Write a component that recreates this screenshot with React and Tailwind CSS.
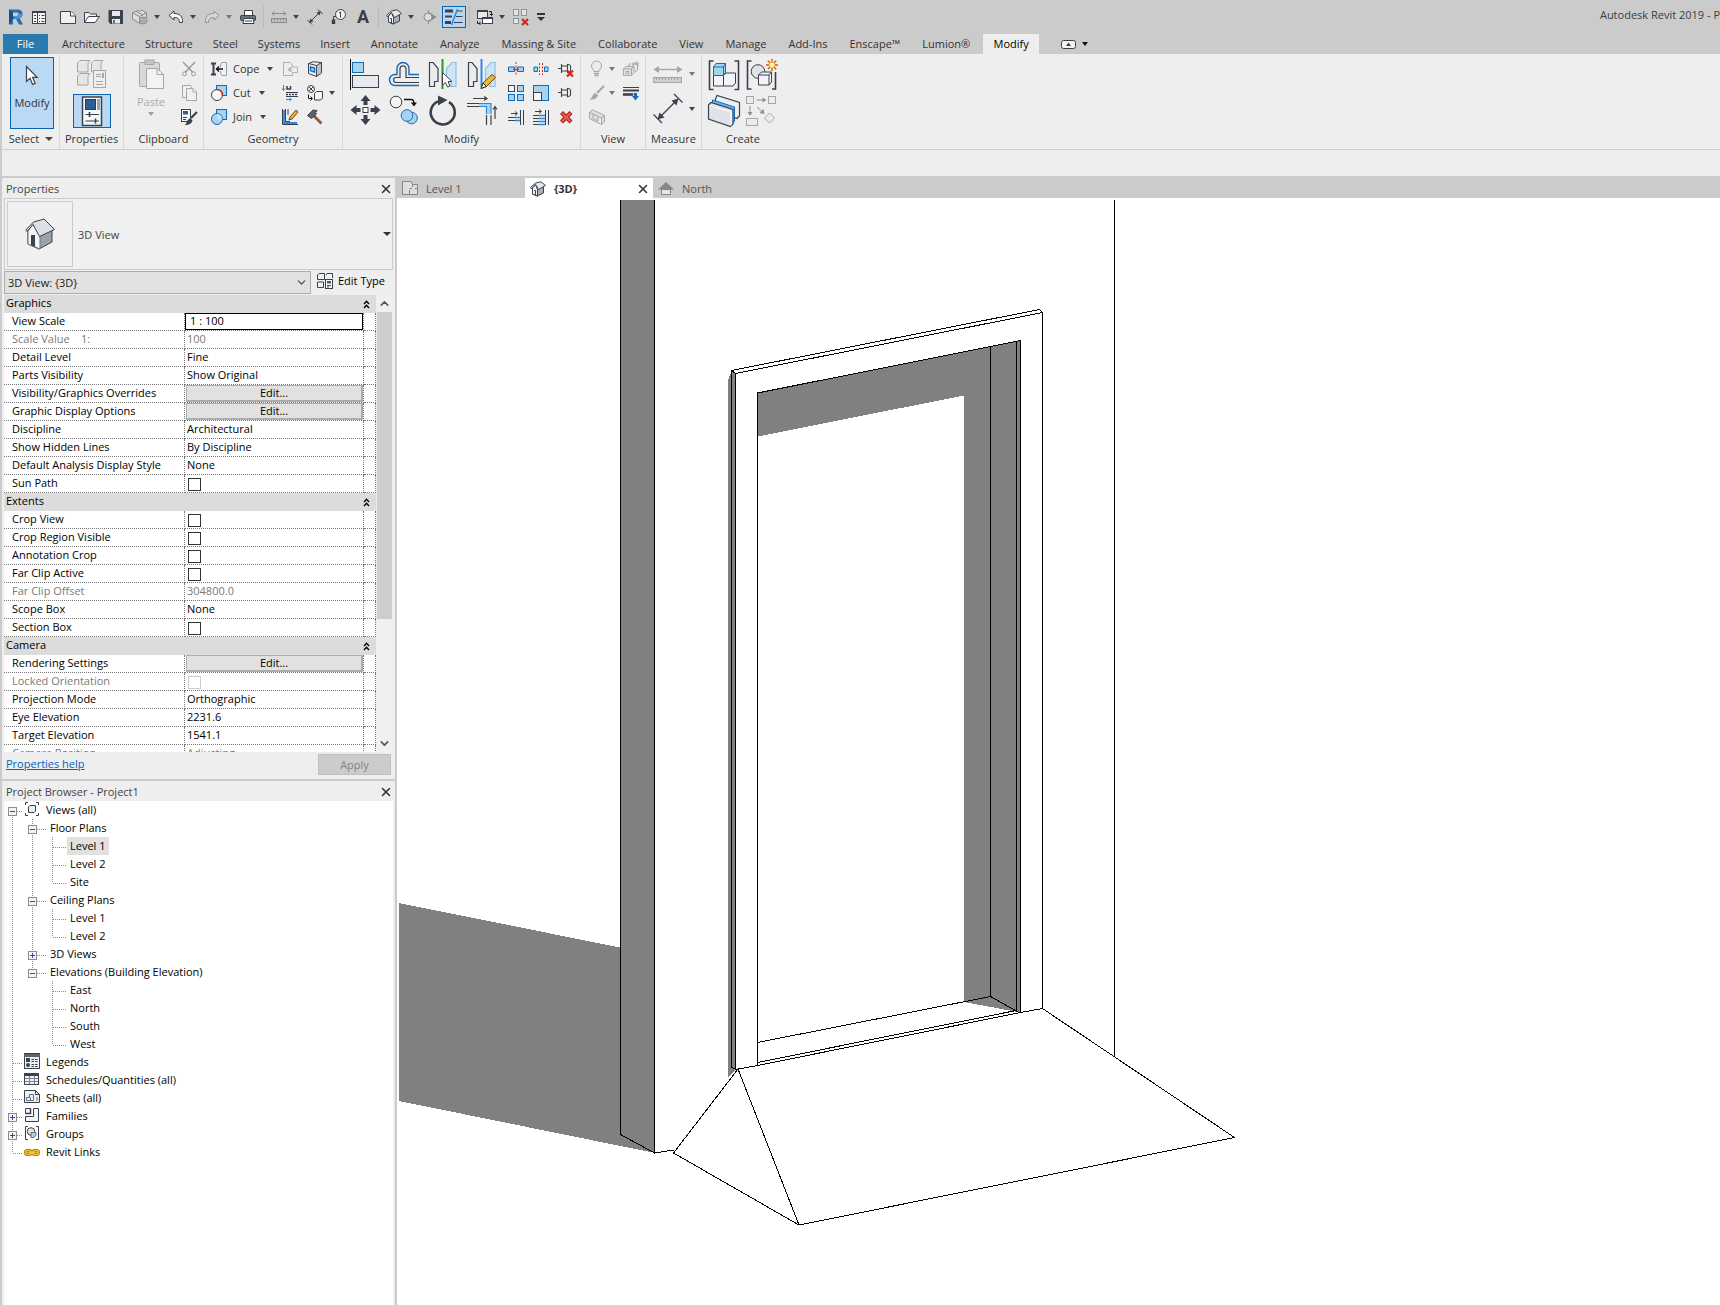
import { X, ChevronDown, ChevronUp } from 'lucide-react'

const DARK = '#3a414c'
const BLUE = '#0f6cbd'
const SKY = '#a8d3ec'
const DIM = '#a6a6a6'

function Ico({ w = 16, h = 16, children }) {
  return (
    <svg
      width={w}
      height={h}
      viewBox={`0 0 ${w} ${h}`}
      fill="none"
      stroke={DARK}
      className="block shrink-0 overflow-visible"
      aria-hidden="true"
    >
      {children}
    </svg>
  )
}

function Caret({ color = '#444', w = 6 }) {
  return (
    <svg width={w} height="4" viewBox="0 0 6 4" preserveAspectRatio="none" className="block shrink-0" aria-hidden="true">
      <path d="M0 0H6L3 4Z" fill={color} />
    </svg>
  )
}

/* ---------- quick access icons ---------- */

const RevitLogo = () => (
  <Ico>
    <path d="M1 0.5H9.5C13 0.5 14.6 2.4 14.6 5C14.6 7.2 13.4 8.6 11.6 9.2L15 15.5H11L8 10H5V15.5H1V3.5Z" fill="#2b6cb0" stroke="none" />
    <path d="M5 3.5H8.6C10 3.5 10.7 4.1 10.7 5.1C10.7 6.2 10 6.9 8.6 6.9H5Z" fill="#cbcbcb" stroke="none" />
    <path d="M1 0.5L5 3.5V10L1 15.5Z" fill="#1d4f86" stroke="none" />
    <path d="M5 6.9L8.6 6.9C10 6.9 10.7 6 10.7 5L14.5 5C14.5 7.5 13 9 11.6 9.2L8 10Z" fill="#4a9ad8" stroke="none" />
  </Ico>
)

const PanelIcon = () => (
  <Ico>
    <rect x="0.5" y="2.5" width="13" height="12" fill="#f4f5f7" />
    <path d="M0 3H14" strokeWidth="2" />
    <path d="M5.5 4V14.5" />
    <path d="M2 6.5H4M2 9.5H4M2 12.5H4M7 6.5H8M7 9.5H8M7 12.5H8M9.5 6.5H12.5M9.5 9.5H12.5M9.5 12.5H12.5" />
  </Ico>
)

const NewIcon = () => (
  <Ico>
    <path d="M0.5 2.5H11L15.5 7V14.5H0.5Z" fill="#eef0f3" />
    <path d="M10.5 2.5V7H15.5" fill="#fff" />
  </Ico>
)

const OpenIcon = () => (
  <Ico>
    <path d="M0.5 13.5V3.5H5L6.5 5H12.5V7" fill="#eef0f3" />
    <path d="M0.5 13.5L4.5 7.5H15.5L11 13.5Z" fill="#fff" />
  </Ico>
)

const SaveIcon = () => (
  <Ico>
    <path d="M1 1.5H14.5V14.5H2.5L1 13Z" fill={DARK} />
    <rect x="4" y="2" width="8" height="5" fill="#e6e9ee" stroke="none" />
    <rect x="4" y="10" width="8" height="4.5" fill="#e6e9ee" stroke="none" />
    <path d="M6 11V14" strokeWidth="1.5" />
  </Ico>
)

const SyncIcon = () => (
  <Ico>
    <g stroke="#8b8b8b">
      <path d="M0.5 4L6 1.5L8 2.5L9.5 1L14.5 4V10L8 14.5L0.5 10Z" fill="#dcdcdc" />
      <path d="M0.5 4L7.5 7.5L14.5 4M7.5 7.5V14M4 2.5L11 6" />
      <circle cx="11.5" cy="11.5" r="4" fill="#9b9b9b" stroke="none" />
      <path d="M8.5 10.5H14.5M9 13H14" stroke="#c4c4c4" />
    </g>
  </Ico>
)

const UndoIcon = () => (
  <Ico>
    <path d="M6 2L1 6.5L6 11V8.5C9.5 8.5 11 9 11.5 13.5H14.5C15 7.5 12 4.5 6 4.5Z" fill="#f7f7f7" />
  </Ico>
)

const RedoIcon = () => (
  <Ico>
    <path d="M10 2L15 6.5L10 11V8.5C6.5 8.5 5 9 4.5 13.5H1.5C1 7.5 4 4.5 10 4.5Z" fill="#d6d6d6" stroke="#929292" />
  </Ico>
)

const PrintIcon = () => (
  <Ico>
    <path d="M4.5 6V1.5H12.5V6" fill="#fff" />
    <rect x="0.5" y="6.5" width="15" height="5" rx="1" fill="#6a717c" />
    <path d="M4 9.5H13L14 14.5H3Z" fill="#fff" />
    <path d="M5 12H12" />
  </Ico>
)

const MeasureSmall = () => (
  <Ico>
    <g stroke="#8c8c8c">
      <path d="M1 4.5H15M3.5 2.5L1 4.5L3.5 6.5M12.5 2.5L15 4.5L12.5 6.5" />
      <rect x="0.5" y="9.5" width="15" height="4" fill="#c0c0c0" />
      <path d="M3.5 10V11.5M6.5 10V11.5M9.5 10V11.5M12.5 10V11.5" />
    </g>
  </Ico>
)

const DimSmall = () => (
  <Ico>
    <path d="M3 13L13 3" />
    <path d="M2 14L3.5 9.5L6.5 12.5ZM14 2L9.5 3.5L12.5 6.5Z" fill={DARK} stroke="none" />
    <path d="M0.5 11L5 15.5M11 0.5L15.5 5" />
  </Ico>
)

const TagIcon = () => (
  <Ico>
    <circle cx="9.5" cy="5.5" r="5" fill="#f2f3f5" />
    <path d="M8 4L9.5 3V8.5" />
    <path d="M5 7.5H2.5V11" />
    <path d="M0.8 10.5H4.2V15H0.8Z" fill={DARK} stroke="none" />
  </Ico>
)

const HouseSmall = () => (
  <Ico>
    <path d="M2.5 7V13L7 15L13.5 12V6L10 3.5Z" fill="#a9b0ba" />
    <path d="M2.5 7L5.5 3.5L7.5 8.5V15L2.5 13Z" fill="#f4f5f7" />
    <path d="M0.5 6.5L5.5 2L11 0.8L15.5 4.5L8.5 8.5L5.5 3.5L1.5 8Z" fill="#e5e7eb" />
    <path d="M4 9.5H5.5V14" />
  </Ico>
)

const SectionIcon = () => (
  <Ico>
    <path d="M6.5 1V15" stroke="#8c8c8c" />
    <path d="M7 3L14.5 8L7 13Z" fill="#8c8c8c" stroke="none" />
    <circle cx="6" cy="8" r="4" fill="#dcdcdc" stroke="#8c8c8c" />
  </Ico>
)

const ThinLines = () => (
  <Ico w={18} h={16}>
    <path d="M0 2H8M0 13.5H6" strokeWidth="3" />
    <path d="M0 7.5H7" strokeWidth="2" />
    <path d="M12 2H17.5M11 7.5H17.5M9 13.5H17.5" strokeWidth="1.2" />
    <path d="M12.5 0L6.5 16" stroke="#2a8be0" strokeWidth="1.5" />
  </Ico>
)

const SwitchWindows = () => (
  <Ico>
    <rect x="0.5" y="1.5" width="10" height="8" fill="#e6e8ec" />
    <path d="M0 2H11" strokeWidth="2" />
    <rect x="5.5" y="8.5" width="10" height="6" fill="#fff" />
    <path d="M5 9H16" strokeWidth="2" />
    <path d="M12 2.5H14.5V6M13 5L14.5 6.5L16 5M0.5 12V14.5H3M2.5 13L4 14.5L2.5 16" stroke="#222" />
  </Ico>
)

const CloseHidden = () => (
  <Ico>
    <g stroke="#8e949c" fill="#e3e5e8">
      <rect x="0.5" y="0.5" width="5" height="6" />
      <rect x="8.5" y="0.5" width="5" height="6" />
      <rect x="0.5" y="9.5" width="5" height="5" />
    </g>
    <path d="M9 10L15 16M15 10L9 16" stroke="#c92a1e" strokeWidth="2.2" />
  </Ico>
)

/* ---------- ribbon icons ---------- */

const CursorBig = () => (
  <Ico w={14} h={22}>
    <path d="M1.5 1.5V16.5L5 13.3L7.6 19.5L10.2 18.4L7.6 12.4H12.2Z" fill="#fff" strokeWidth="1.2" />
  </Ico>
)

const TypeProps = () => (
  <Ico w={32} h={30}>
    <g stroke={DIM} fill="#e6e6e6">
      <path d="M1.5 4L4 1.5H14L12 4V13H1.5ZM15.5 4L18 1.5H27L25 4V13H15.5Z" />
      <path d="M1.5 17L4 14.5H14L12 17V26H1.5Z" />
      <rect x="17.5" y="11.5" width="12" height="17" fill="#eee" />
      <path d="M20 15.5H25M20 17.5H25M20 22.5H27M20 25.5H27" />
      <path d="M27 14V19" strokeWidth="2" />
    </g>
  </Ico>
)

const PropsPanel = () => (
  <Ico w={22} h={31}>
    <rect x="1.5" y="1" width="19" height="28.5" fill="#f7f8fa" strokeWidth="1.5" />
    <rect x="4.5" y="3.5" width="10" height="10" fill="#2c5f96" stroke="#1d3f66" />
    <rect x="16" y="3" width="3" height="11" fill="#9ba3ae" stroke="none" />
    <path d="M4.5 18.5H18M4.5 25H18" />
    <path d="M8.5 16V21M14.5 22.5V27.5" strokeWidth="1.6" />
  </Ico>
)

const PasteIcon = () => (
  <Ico w={27} h={31}>
    <g stroke={DIM}>
      <rect x="1.5" y="3.5" width="20" height="24" rx="1" fill="#d9d9d9" />
      <rect x="7" y="1" width="9" height="4.5" fill="#c4c4c4" />
      <path d="M8.5 9.5H19L25.5 15.5V29.5H8.5Z" fill="#f3f3f3" />
      <path d="M19 9.5V15.5H25.5" />
    </g>
  </Ico>
)

const CutClip = () => (
  <Ico>
    <g stroke="#9b9b9b">
      <path d="M2 1L12 11.5M14 1L4 11.5" strokeWidth="1.5" />
      <circle cx="3.5" cy="12.8" r="2" />
      <circle cx="12.5" cy="12.8" r="2" />
    </g>
  </Ico>
)

const CopyClip = () => (
  <Ico>
    <g stroke={DIM} fill="#f0f0f0">
      <path d="M1.5 0.5H9.5L11 3V12.5H1.5Z" />
      <path d="M5.5 3.5H12L15.5 7V15.5H5.5Z" />
      <path d="M12 3.5V7H15.5" />
    </g>
  </Ico>
)

const MatchType = () => (
  <Ico>
    <rect x="0.5" y="0.5" width="9" height="12" fill="#f7f8fa" />
    <rect x="2" y="2" width="5" height="3.5" fill="#2c5f96" stroke="none" />
    <path d="M2 8.5H6M2 10.5H5" />
    <path d="M16 3L10 9" strokeWidth="2.2" />
    <path d="M4 16C5.5 15 5.5 11 8.5 9.5L11.5 11C11.5 14 8 16 4 16Z" fill={DARK} stroke="none" />
  </Ico>
)

const CopeIcon = () => (
  <Ico>
    <path d="M0 2.5H5M2.5 2.5V13.5M0 13.5H5" strokeWidth="2" />
    <path d="M11 1.5H15.5V14.5H11L9.5 12V10M9.5 6V4L11 1.5" fill="#eef1f5" stroke="#98a0ac" />
    <path d="M5 8H12M8 5.5L5.5 8L8 10.5" stroke="#111" strokeWidth="1.4" />
  </Ico>
)

const CutGeom = () => (
  <Ico>
    <rect x="5.5" y="0.5" width="10" height="10" fill={SKY} stroke={BLUE} />
    <circle cx="6" cy="10" r="5.5" fill="#f8f8f8" />
    <path d="M5.5 4.5C9 4.5 11.5 7 11.5 10.5" stroke="#e02418" strokeWidth="1.6" />
  </Ico>
)

const JoinGeom = () => (
  <Ico>
    <rect x="5.5" y="0.5" width="10" height="10" fill={SKY} stroke={BLUE} />
    <circle cx="6" cy="10" r="5.5" fill={SKY} stroke={BLUE} />
    <path d="M6 10.5V5C9 5 11.3 7.5 11.3 10.5Z" fill="#c7e2f2" stroke="none" />
  </Ico>
)

const CopeGrey = () => (
  <Ico>
    <g stroke="#b0b0b0" fill="#ececec">
      <path d="M1.5 1.5H8L10.5 4V6H15.5V11.5H10.5V14.5H1.5Z" />
      <path d="M6 8.5L9 6V11Z" fill="#c0c0c0" />
    </g>
  </Ico>
)

const WallFace = () => (
  <Ico>
    <path d="M1.5 2.5L9.5 4.5V15.5L1.5 12.5Z" fill="#eef1f5" />
    <path d="M9.5 4.5L14.5 1.5V12L9.5 15.5Z" fill="#bcc3cd" />
    <path d="M1.5 2.5L6 0.8L14.5 1.5" />
    <path d="M3.5 6L7.5 7V11L3.5 9.8Z" fill={SKY} stroke={BLUE} strokeWidth="1.4" />
  </Ico>
)

const BeamJoin = () => (
  <Ico>
    <path d="M1.5 0V5M0 3.5L1.5 5.5L3 3.5M4 14.5H9M7.5 13L9.5 14.5L7.5 16" stroke="#2a8be0" />
    <path d="M5 1V4H8.5V1" strokeWidth="1.5" />
    <path d="M4 7.5H16M4 11.5H16" />
    <path d="M4 9.5H16" strokeWidth="1.6" strokeDasharray="2 1" />
  </Ico>
)

const UnjoinIcon = () => (
  <Ico>
    <circle cx="4" cy="4" r="3.5" fill="#f6f6f6" />
    <path d="M2 2L6 6M6 2L2 6" />
    <path d="M1.5 9.5V13.5H5M3.5 11.5L5.5 13.5L3.5 15.5" stroke="#111" />
    <path d="M7.5 8.5L9.5 6.5H15.5V13L13.5 15H7.5Z" fill="#f2f4f7" />
  </Ico>
)

const SplitFace = () => (
  <Ico>
    <path d="M0.5 0V15.5H16M3.5 0V12.5H8M6 0V6" />
    <path d="M2 1V14H15" stroke="#2a8be0" strokeWidth="1.8" />
    <path d="M7 11L8 8L14 1L16 3L10 10Z" fill="#f2b13c" stroke="#6b4a12" />
  </Ico>
)

const HammerIcon = () => (
  <Ico>
    <path d="M7 7L14.5 14.5" stroke="#8a5a44" strokeWidth="2.8" />
    <path d="M0.5 6.5L6 1L10 1.5L8.5 3.5L9.5 5L4.5 9.5Z" fill="#5b626d" />
  </Ico>
)

const AlignIcon = () => (
  <Ico w={32} h={32}>
    <path d="M0.5 0V31" stroke="#111" />
    <rect x="2.5" y="3.5" width="11" height="10" fill={SKY} stroke={BLUE} />
    <rect x="2.5" y="16.5" width="26" height="12" fill="#e6e9ee" />
  </Ico>
)

const OffsetIcon = () => (
  <Ico w={32} h={32}>
    <path d="M30 15.5H20V9.5A6 6 0 0 0 8 9.5V15.5H6A5.5 5.5 0 0 0 6 26.5H30" stroke={BLUE} strokeWidth="1.4" />
    <path d="M30 18.5H17V9.8A3 3 0 0 0 11 9.8V18.5H7A2.5 2.5 0 0 0 7 23.5H30" strokeWidth="1.2" />
  </Ico>
)

const MirrorPick = () => (
  <Ico w={32} h={32}>
    <path d="M1.5 3.5H5L10 9.5V22.5H6.5V27.5H1.5Z" fill="#e9ecf0" strokeWidth="1.2" />
    <path d="M28 3.5H24L18.5 9.5V22.5H23V27.5H28Z" fill="#cfe5f3" stroke="#8fc1e2" strokeWidth="1.2" />
    <path d="M14.5 0V30" stroke="#1fa01f" strokeWidth="2" />
    <path d="M14.5 13.5V26L17.5 23.5L19.5 28L22 27L20 22.5H24Z" fill="#fff" />
  </Ico>
)

const MirrorDraw = () => (
  <Ico w={32} h={32}>
    <path d="M1.5 3.5H5L10 9.5V22.5H6.5V27.5H1.5Z" fill="#e9ecf0" strokeWidth="1.2" />
    <path d="M28 3.5H24L18.5 9.5V22.5H23V27.5H28Z" fill="#cfe5f3" stroke="#8fc1e2" strokeWidth="1.2" />
    <path d="M14.5 0V28" stroke="#2a8be0" strokeWidth="2" />
    <path d="M14 29.5L16 24L25 15.5L28.5 18.5L19.5 27.5Z" fill="#f5b43a" stroke="#6b4a12" />
    <path d="M14 29.5L16 24L19.5 27.5Z" fill="#fff3d6" stroke="#3a2a10" />
  </Ico>
)

const MoveIcon = () => (
  <Ico w={32} h={32}>
    <g fill={DARK} stroke="none">
      <path d="M15.5 1L20.5 7H17.5V11H13.5V7H10.5Z" />
      <path d="M15.5 31L20.5 25H17.5V21H13.5V25H10.5Z" />
      <path d="M0.5 16L6.5 11V14H10.5V18H6.5V21Z" />
      <path d="M30.5 16L24.5 11V14H20.5V18H24.5V21Z" />
    </g>
    <rect x="13" y="13.5" width="5" height="5" fill="#fff" />
  </Ico>
)

const CopyIcon = () => (
  <Ico w={32} h={32}>
    <circle cx="7" cy="8" r="5.8" fill="#f3f4f6" />
    <path d="M15 5.5H22C24.5 5.5 25 7 25 9.5" stroke="#111" strokeWidth="1.3" />
    <path d="M21.8 8.5H28L25 12.5Z" fill="#111" stroke="none" />
    <circle cx="22.5" cy="24" r="5.8" fill={SKY} stroke={BLUE} />
    <circle cx="18" cy="21.5" r="5.8" fill={SKY} stroke={BLUE} />
  </Ico>
)

const RotateIcon = () => (
  <Ico w={32} h={32}>
    <path d="M21 8.2A12 12 0 1 1 10 7.4" strokeWidth="2.6" />
    <path d="M10 1.5L19.5 6L10 11.5Z" fill={DARK} stroke="none" />
  </Ico>
)

const TrimIcon = () => (
  <Ico w={32} h={32}>
    <path d="M6 4.5H20M17 2.5L20 4.5L17 6.5" strokeWidth="1.2" />
    <path d="M0 9.5H12M0 12.5H12M19.5 21V31M24 21V31" strokeWidth="1.2" />
    <path d="M12 9.5H24V20H19.5V12.5H12Z" fill={SKY} stroke="none" />
    <path d="M12 9.5H24V20M12 12.5H19.5V20" stroke="#2a8be0" strokeWidth="1.2" />
    <path d="M28 25V12.5M26 15.5L28 12.5L30 15.5" strokeWidth="1.2" />
  </Ico>
)

const SplitEl = () => (
  <Ico>
    <path d="M8 1V15" stroke="#d0281c" strokeDasharray="2 1.5" />
    <path d="M0.5 6H6.5V10.5H0.5ZM9.5 6H15.5V10.5H9.5Z" fill={SKY} stroke={BLUE} />
    <path d="M5 8.2H11" stroke="#d0281c" />
  </Ico>
)

const SplitGap = () => (
  <Ico>
    <path d="M6.5 2V14M9.5 2V14" stroke="#d0281c" strokeDasharray="2 1.5" />
    <path d="M1 6H4.5V10.5H1ZM11.5 6H15V10.5H11.5Z" fill={SKY} stroke={BLUE} />
  </Ico>
)

const PinIcon = ({ cross }) => (
  <Ico>
    <path d="M0 7.5H3.5M3.5 3V12M3.5 5H9.5M3.5 10H9.5M9.5 3C10 4 12.5 3.5 12.5 5V10C12.5 11.5 10 11 9.5 12Z" fill="#f3f3f3" strokeWidth="1.1" />
    {cross && <path d="M9 9.5L15 15.5M15 9.5L9 15.5" stroke="#d0281c" strokeWidth="2.2" />}
  </Ico>
)

const ArrayIcon = () => (
  <Ico>
    <rect x="0.5" y="0.5" width="6" height="6" fill="#f3f4f6" />
    <g fill={SKY} stroke={BLUE}>
      <rect x="9.5" y="0.5" width="6" height="6" />
      <rect x="0.5" y="9.5" width="6" height="6" />
      <rect x="9.5" y="9.5" width="6" height="6" />
    </g>
  </Ico>
)

const ScaleIcon = () => (
  <Ico>
    <rect x="0.5" y="0.5" width="15" height="15" fill={SKY} stroke={BLUE} />
    <rect x="0.5" y="7.5" width="8" height="8" fill="#f5f5f5" />
  </Ico>
)

const TrimOne = () => (
  <Ico>
    <path d="M3 4.5H9M7 2.5L9.5 4.5L7 6.5M0 8.5H7M0 11.5H7M12.5 1V16M15.5 1V16" />
    <path d="M7 8.5H12M7 11.5H12" stroke="#2a8be0" strokeWidth="1.4" />
  </Ico>
)

const TrimMany = () => (
  <Ico>
    <path d="M2 2.5H8M6 0.5L8.5 2.5L6 4.5M0 6.5H6M0 9.5H6M0 12.5H6M0 15.5H6M12.5 1V16M15.5 1V16" />
    <path d="M6 6.5H12M6 9.5H12M6 12.5H12M6 15.5H12" stroke="#2a8be0" strokeWidth="1.4" />
  </Ico>
)

const DeleteIcon = () => (
  <Ico>
    <path d="M3.5 3.5L13 13M13 3.5L3.5 13" stroke="#a3160e" strokeWidth="4.2" />
    <path d="M4 4L12.5 12.5M12.5 4L4 12.5" stroke="#ef5a50" strokeWidth="2.4" />
  </Ico>
)

const BulbIcon = () => (
  <Ico>
    <path d="M5 10.5C5 8.5 2.5 8 2.5 5A5 5 0 0 1 12.5 5C12.5 8 10 8.5 10 10.5Z" fill="#ececec" stroke={DIM} />
    <path d="M5 12.5H10M5.5 14.5H9.5" stroke={DIM} strokeWidth="1.4" />
  </Ico>
)

const DisplaceIcon = () => (
  <Ico>
    <g stroke={DIM} fill="#e4e4e4">
      <path d="M0.5 8L3 5.5H11V12L8.5 14.5H0.5Z" />
      <path d="M0.5 8H8.5V14.5M8.5 8L11 5.5M3 10.5H6V12.5H3Z" />
      <path d="M6 5V3H8M12 11L14.5 9V3M9 1.5L16 5M14 0L10 5M16 2L9 3.5" />
    </g>
  </Ico>
)

const BrushIcon = () => (
  <Ico>
    <path d="M15 1L8 8" stroke={DIM} strokeWidth="2.2" />
    <path d="M0.5 14.5C3 13.5 3 9.5 6 8L9 10C8.5 13.5 5 15 0.5 14.5Z" fill={DIM} stroke="none" />
  </Ico>
)

const LineWork = () => (
  <Ico>
    <path d="M0 2.5H16" />
    <path d="M0 5.5H16" strokeWidth="2" />
    <path d="M0 9.5H10" strokeWidth="2.6" />
    <path d="M10.8 8H14V11H16L12.4 15.5L9 11H10.8Z" fill="#0f6cbd" stroke="none" />
  </Ico>
)

const BoxIcon = () => (
  <Ico>
    <g stroke={DIM} fill="#dedede">
      <path d="M0.5 3.5L3.5 0.8L15.5 6.5V13L12.5 15.5L0.5 9.5Z" />
      <path d="M0.5 3.5L12.5 9V15.5M12.5 9L15.5 6.5M4 5V9.5L9 12V8" fill="#eee" />
    </g>
  </Ico>
)

const MeasureBig = () => (
  <Ico w={30} h={24}>
    <g stroke={DIM}>
      <path d="M2 7.5H28" strokeWidth="1.4" />
      <path d="M0.5 7.5L6 4V11ZM29.5 7.5L24 4V11Z" fill={DIM} stroke="none" />
      <rect x="0.5" y="15.5" width="28" height="5" fill="#cfcfcf" />
      <path d="M3.5 16V18M6.5 16V18M9.5 16V18M12.5 16V18M15.5 16V18M18.5 16V18M21.5 16V18M24.5 16V18" />
    </g>
  </Ico>
)

const DimBig = () => (
  <Ico w={30} h={32}>
    <path d="M7 24L23 8" strokeWidth="1.3" />
    <path d="M4.5 26.5L6.5 19.5L11.5 24.5ZM25.5 5.5L18.5 7.5L23.5 12.5Z" fill={DARK} stroke="none" />
    <path d="M0.5 21.5L9 30M21 1L29.5 9.5" strokeWidth="1.3" />
  </Ico>
)

const AssemblyIcon = () => (
  <Ico w={32} h={32}>
    <path d="M5.5 2H1.5V30.5H5.5M26.5 2H30.5V30.5H26.5" strokeWidth="1.6" />
    <path d="M5.5 16.5H15.5V27H5.5ZM15.5 16.5L18 14H27.5V24L25 27H15.5" fill="#f2f4f7" />
    <path d="M5.5 8L8 4.5H17.5V13.5L15.5 16.5H5.5Z" fill={SKY} stroke={BLUE} />
    <path d="M5.5 8H15.5V16.5M15.5 8L17.5 4.5" stroke={BLUE} />
  </Ico>
)

const GroupIcon = () => (
  <Ico w={32} h={32}>
    <path d="M5.5 2H1.5V30H5.5M26 30H29.5V13" strokeWidth="1.6" />
    <circle cx="12" cy="12.5" r="6.8" fill="#dfe3e8" />
    <path d="M12.5 16L15.5 13H25.5V23L23 26H12.5Z" fill="#f2f4f7" />
    <path d="M12.5 16H23V26M23 16L25.5 13" />
    <path d="M26 0V12M20 6H32M21.8 1.8L30.2 10.2M30.2 1.8L21.8 10.2" stroke="#d8581a" strokeWidth="1.4" />
    <circle cx="26" cy="6" r="3" fill="#fff6a8" stroke="#f0a020" />
  </Ico>
)

const PartsIcon = () => (
  <Ico w={32} h={34}>
    <path d="M7.5 5L9 1.5L31.5 8.5V22L29 24.5L7.5 17Z" fill="#eceff3" strokeWidth="1.2" />
    <path d="M4.5 9V6L26.5 13V27L24.5 29.5L4.5 22Z" fill="#6db6ee" stroke={BLUE} />
    <path d="M0.5 11L3 8.5L25 15.5V30L22.5 32.5L0.5 25Z" fill="#dfe3e9" strokeWidth="1.2" />
    <path d="M1.5 11.5L23 18V31.5" stroke="#fff" />
  </Ico>
)

const SimilarIcon = () => (
  <Ico w={32} h={32}>
    <g stroke={DIM} fill="#ececec">
      <rect x="0.5" y="1.5" width="7" height="7" />
      <rect x="22.5" y="1.5" width="7" height="7" />
      <rect x="0.5" y="23.5" width="11" height="7" />
      <path d="M23.5 18L28.5 23L23.5 28L18.5 23Z" />
      <path d="M10.5 5H19M4 11V19M11 12L17 17.5" stroke="#8f8f8f" fill="none" />
      <path d="M20.5 5L16.5 2.5V7.5ZM4 21L1.5 17H6.5ZM18.5 19L17.5 14L13.5 18Z" fill="#8f8f8f" stroke="none" />
    </g>
  </Ico>
)

/* ---------- panel and tab icons ---------- */

const HouseBig = () => (
  <Ico w={30} h={32}>
    <path d="M3 13V26L14 31L27 24V11L18 5Z" fill="#9aa2ad" />
    <path d="M3 13L8 6L15 17V31L3 26Z" fill="#f3f4f6" stroke="#6b727d" />
    <path d="M0.8 12L8.5 4L19 1L29.5 11.5L14.5 18.5L8 6.5L2 13.5Z" fill="#dcdfe4" />
    <path d="M6 17H10V29L6 27Z" fill="#3c424c" stroke="none" />
  </Ico>
)

const EditTypeIcon = () => (
  <Ico>
    <path d="M0.5 2L2 0.5H7.5V6.5H0.5ZM9 2L10 0.5H15.5V5M0.5 9H6.5V14.5H0.5Z" fill="#f2f3f5" />
    <rect x="8.5" y="6.5" width="7" height="9" fill="#fff" />
    <rect x="10" y="8" width="4" height="2.5" fill="#2c5f96" stroke="none" />
    <path d="M10 12.5H14M10 14H12" />
  </Ico>
)

const PlanTab = () => (
  <Ico>
    <g stroke="#84888e" fill="#dedede">
      <path d="M0.5 0.5H9L10.5 3.5H15.5V13.5H0.5Z" />
      <path d="M7.5 13V9M7.5 7.5H10M10.5 3.5V6M13 7.5H15" />
    </g>
  </Ico>
)

const ElevTab = () => (
  <Ico>
    <path d="M8 1L16 8.5H0Z" fill="#84888e" stroke="none" />
    <rect x="3.5" y="8.5" width="9" height="5" fill="#e6e6e6" stroke="#84888e" />
  </Ico>
)

const ViewsIcon = () => (
  <Ico>
    <path d="M4 1.5H1.5V4M12 1.5H14.5V4M4 14.5H1.5V12M12 14.5H14.5V12" />
    <path d="M4.5 6L6 4.5H11.5V10L10 11.5H4.5Z" fill="#eef0f3" />
  </Ico>
)

const LegendIcon = () => (
  <Ico>
    <rect x="0.5" y="0.5" width="15" height="15" fill="#eef0f3" />
    <path d="M0 2.5H16" strokeWidth="3" stroke="#5b626d" />
    <rect x="2.5" y="5.5" width="3" height="3" fill={DARK} />
    <circle cx="4" cy="12" r="2" fill={DARK} stroke="none" />
    <path d="M7.5 6.5H13.5M7.5 8.5H13.5M7.5 11.5H13.5M7.5 13.5H13.5" strokeDasharray="2.5 1" />
  </Ico>
)

const ScheduleIcon = () => (
  <Ico>
    <rect x="0.5" y="2.5" width="14" height="11" fill="#eef0f3" />
    <path d="M0 3.5H15" strokeWidth="3" />
    <path d="M1 7.5H14M1 10.5H14M5.5 5V13M10.5 5V13" stroke="#7b828d" />
  </Ico>
)

const SheetIcon = () => (
  <Ico>
    <path d="M0.5 1.5H11.5L15.5 5.5V13.5H0.5Z" fill="#eef0f3" />
    <path d="M11.5 1.5V5.5H15.5" />
    <path d="M2.5 11.5V8.5H5.5V5.5H9.5V11.5H6.5V8.5M2.5 11.5H6M13 8V12" stroke="#5b7186" />
  </Ico>
)

const FamilyIcon = () => (
  <Ico>
    <path d="M1.5 1.5H6.5V6.5H1.5ZM9.5 1.5H14.5V14.5H1.5V9.5H9.5Z" fill="#f5f6f8" />
    <path d="M6.5 1.5V6.5H1.5" strokeWidth="1.5" />
  </Ico>
)

const GroupsTree = () => (
  <Ico>
    <path d="M4 1.5H1.5V14.5H4M12 1.5H14.5V14.5H12" />
    <circle cx="7" cy="6.5" r="3.8" fill="#dfe3e8" />
    <path d="M7 7.5H12V10L10 12.5H7Z" fill="#c3cbd6" stroke="#5b7186" />
  </Ico>
)

const LinkIcon = () => (
  <Ico>
    <g stroke="#b57a00" strokeWidth="3.2">
      <rect x="1.6" y="7.6" width="5.6" height="3.8" rx="1.9" />
      <rect x="8.8" y="7.6" width="5.6" height="3.8" rx="1.9" />
    </g>
    <g stroke="#f5c93a" strokeWidth="1.4">
      <rect x="1.6" y="7.6" width="5.6" height="3.8" rx="1.9" />
      <rect x="8.8" y="7.6" width="5.6" height="3.8" rx="1.9" />
      <path d="M5.5 9.5H10.5" />
    </g>
  </Ico>
)

/* ---------- top bar ---------- */

function QatButton({ label, caret, caretColor, children }) {
  return (
    <button type="button" aria-label={label} className="flex h-5 items-center gap-[6px]">
      {children}
      {caret && <Caret color={caretColor} />}
    </button>
  )
}

const QatSep = () => <span className="-mx-px h-[22px] w-px bg-[#b9b9b9]" />

function QuickAccess() {
  return (
    <header className="flex h-[34px] items-center justify-between overflow-hidden pl-2">
      <div className="flex shrink-0 items-center gap-2">
        <QatButton label="Revit"><RevitLogo /></QatButton>
        <QatButton label="Home"><PanelIcon /></QatButton>
        <span className="-ml-1" />
        <QatButton label="New"><NewIcon /></QatButton>
        <QatButton label="Open"><OpenIcon /></QatButton>
        <QatButton label="Save"><SaveIcon /></QatButton>
        <QatButton label="Synchronize" caret><SyncIcon /></QatButton>
        <QatButton label="Undo" caret><UndoIcon /></QatButton>
        <QatButton label="Redo" caret caretColor="#777"><RedoIcon /></QatButton>
        <QatButton label="Print"><PrintIcon /></QatButton>
        <QatSep />
        <QatButton label="Measure" caret><MeasureSmall /></QatButton>
        <QatButton label="Aligned dimension"><DimSmall /></QatButton>
        <QatButton label="Tag by category"><TagIcon /></QatButton>
        <button type="button" className="w-4 text-center font-['Roboto',sans-serif] text-[18px] leading-5 font-bold text-[#3a3f47]">A</button>
        <QatSep />
        <QatButton label="Default 3D view" caret><HouseSmall /></QatButton>
        <QatButton label="Section"><SectionIcon /></QatButton>
        <button
          type="button"
          aria-label="Thin lines"
          className="-mx-1 flex h-[22px] w-6 items-center justify-center border border-[#0a64b4] bg-[#b5d7f3]"
        >
          <ThinLines />
        </button>
        <QatSep />
        <QatButton label="Switch windows" caret><SwitchWindows /></QatButton>
        <QatButton label="Close hidden windows"><CloseHidden /></QatButton>
        <button type="button" aria-label="Customize" className="flex w-2 flex-col items-center gap-[2px]">
          <span className="h-[2px] w-2 bg-[#333]" />
          <Caret color="#333" w={8} />
        </button>
      </div>
      <span className="h-[34px] pt-[7px] whitespace-nowrap text-[#3c3c3c]">Autodesk Revit 2019 - P</span>
    </header>
  )
}

const MAIN_TABS = ['Architecture', 'Structure', 'Steel', 'Systems', 'Insert']
const MORE_TABS = [
  'Annotate', 'Analyze', 'Massing & Site', 'Collaborate', 'View', 'Manage', 'Add-Ins', 'Enscape™', 'Lumion®',
]

function RibbonTabs() {
  return (
    <nav className="flex h-5 items-stretch pl-[3px] text-[#333]">
      <button type="button" className="mr-1 w-[45px] bg-[#2a7ab0] text-white">File</button>
      {MAIN_TABS.map((tab) => (
        <button type="button" key={tab} className="px-[10px] whitespace-nowrap">{tab}</button>
      ))}
      {MORE_TABS.map((tab) => (
        <button type="button" key={tab} className="px-[11px] whitespace-nowrap">{tab}</button>
      ))}
      <button type="button" className="ml-[2px] w-14 bg-[#eee] text-black">Modify</button>
      <button type="button" aria-label="Minimize ribbon" className="ml-[22px] flex items-center gap-[6px]">
        <Ico w={15} h={9}>
          <rect x="0.5" y="0.5" width="14" height="8" rx="2" fill="#f3f3f3" />
          <path d="M7.5 2.5L10 6H5Z" fill={DARK} stroke="none" />
        </Ico>
        <Caret color="#111" />
      </button>
    </nav>
  )
}

/* ---------- ribbon ---------- */

function Panel({ title, width, last, caret, children }) {
  return (
    <section className={`flex shrink-0 flex-col ${width} ${last ? '' : 'border-r border-[#d9d9d9]'}`}>
      <div className="flex h-[74px] items-start">{children}</div>
      <h2 className="flex h-5 items-center justify-center gap-[6px]">
        {title}
        {caret && <Caret w={8} />}
      </h2>
    </section>
  )
}

function Tool({ label, children }) {
  return <button type="button" aria-label={label} className="flex items-center">{children}</button>
}

function GeomTool({ label, icon }) {
  return (
    <button type="button" className="flex h-4 items-center gap-[6px]">
      {icon}
      <span>{label}</span>
      <span className="ml-[2px]"><Caret /></span>
    </button>
  )
}

function Ribbon() {
  return (
    <div className="ml-[2px] flex h-24 overflow-hidden border-b border-[#cdcdcd] bg-[#eee] pt-px pl-px text-[#333]">
      <Panel title="Select" width="w-[57px]" caret>
        <button
          type="button"
          className="mt-[2px] ml-[7px] flex h-[72px] w-11 flex-col items-center border border-[#0a64b4] bg-[#b9d9f4] pt-[7px]"
        >
          <CursorBig />
          <span className="mt-2">Modify</span>
        </button>
      </Panel>

      <Panel title="Properties" width="w-16">
        <div className="flex w-full flex-col items-center pt-1">
          <Tool label="Type properties"><TypeProps /></Tool>
          <button
            type="button"
            aria-label="Properties"
            className="mt-[5px] flex h-[34px] w-[38px] items-center justify-center border border-[#0a64b4] bg-[#b9d9f4]"
          >
            <PropsPanel />
          </button>
        </div>
      </Panel>

      <Panel title="Clipboard" width="w-20">
        <button type="button" className="mt-1 ml-3 flex w-[30px] flex-col items-center text-[#a8a8a8]">
          <PasteIcon />
          <span className="mt-1 mb-[2px]">Paste</span>
          <Caret color="#a0a0a0" />
        </button>
        <div className="mt-[6px] ml-[15px] flex flex-col gap-2">
          <Tool label="Cut to clipboard"><CutClip /></Tool>
          <Tool label="Copy to clipboard"><CopyClip /></Tool>
          <Tool label="Match type"><MatchType /></Tool>
        </div>
      </Panel>

      <Panel title="Geometry" width="w-[139px]">
        <div className="mt-[6px] ml-[7px] flex w-[71px] flex-col items-start gap-2">
          <GeomTool label="Cope" icon={<CopeIcon />} />
          <GeomTool label="Cut" icon={<CutGeom />} />
          <GeomTool label="Join" icon={<JoinGeom />} />
        </div>
        <div className="mt-[6px] grid grid-cols-[16px_28px] gap-x-[9px] gap-y-2">
          <Tool label="Remove coping"><CopeGrey /></Tool>
          <Tool label="Wall opening"><WallFace /></Tool>
          <Tool label="Beam joins"><BeamJoin /></Tool>
          <button type="button" aria-label="Wall joins" className="flex items-center gap-[6px]">
            <UnjoinIcon />
            <Caret />
          </button>
          <Tool label="Split face"><SplitFace /></Tool>
          <Tool label="Demolish"><HammerIcon /></Tool>
        </div>
      </Panel>

      <Panel title="Modify" width="w-[238px]">
        <div className="mt-1 ml-[7px] grid grid-cols-4 gap-x-[7px] gap-y-[3px]">
          <Tool label="Align"><AlignIcon /></Tool>
          <Tool label="Offset"><OffsetIcon /></Tool>
          <Tool label="Mirror pick axis"><MirrorPick /></Tool>
          <Tool label="Mirror draw axis"><MirrorDraw /></Tool>
          <Tool label="Move"><MoveIcon /></Tool>
          <Tool label="Copy"><CopyIcon /></Tool>
          <Tool label="Rotate"><RotateIcon /></Tool>
          <Tool label="Trim to corner"><TrimIcon /></Tool>
        </div>
        <div className="mt-[6px] ml-[9px] grid grid-cols-3 gap-x-[9px] gap-y-2">
          <Tool label="Split element"><SplitEl /></Tool>
          <Tool label="Split with gap"><SplitGap /></Tool>
          <Tool label="Unpin"><PinIcon cross /></Tool>
          <Tool label="Array"><ArrayIcon /></Tool>
          <Tool label="Scale"><ScaleIcon /></Tool>
          <Tool label="Pin"><PinIcon /></Tool>
          <Tool label="Trim single"><TrimOne /></Tool>
          <Tool label="Trim multiple"><TrimMany /></Tool>
          <Tool label="Delete"><DeleteIcon /></Tool>
        </div>
      </Panel>

      <Panel title="View" width="w-[65px]">
        <div className="mt-[6px] ml-2 grid grid-cols-[26px_16px] gap-x-2 gap-y-2">
          <button type="button" aria-label="Hide in view" className="flex items-center gap-1"><BulbIcon /><Caret color="#777" /></button>
          <Tool label="Displace"><DisplaceIcon /></Tool>
          <button type="button" aria-label="Override graphics" className="flex items-center gap-1"><BrushIcon /><Caret color="#777" /></button>
          <Tool label="Linework"><LineWork /></Tool>
          <Tool label="Selection box"><BoxIcon /></Tool>
        </div>
      </Panel>

      <Panel title="Measure" width="w-14">
        <div className="mt-[7px] ml-[7px] flex flex-col gap-[7px]">
          <button type="button" aria-label="Measure" className="flex items-center gap-[6px]"><MeasureBig /><Caret color="#777" /></button>
          <button type="button" aria-label="Dimension" className="flex items-center gap-[6px]"><DimBig /><Caret /></button>
        </div>
      </Panel>

      <Panel title="Create" width="w-[82px]" last>
        <div className="mt-1 ml-[6px] grid grid-cols-2 gap-x-[6px] gap-y-[3px]">
          <Tool label="Create assembly"><AssemblyIcon /></Tool>
          <Tool label="Create group"><GroupIcon /></Tool>
          <Tool label="Create parts"><PartsIcon /></Tool>
          <Tool label="Create similar"><SimilarIcon /></Tool>
        </div>
      </Panel>
    </div>
  )
}

/* ---------- properties palette ---------- */

const PROPERTY_GROUPS = [
  {
    name: 'Graphics',
    rows: [
      { name: 'View Scale', kind: 'input', value: '1 : 100' },
      { name: 'Scale Value    1:', value: '100', disabled: true },
      { name: 'Detail Level', value: 'Fine' },
      { name: 'Parts Visibility', value: 'Show Original' },
      { name: 'Visibility/Graphics Overrides', kind: 'button', value: 'Edit...' },
      { name: 'Graphic Display Options', kind: 'button', value: 'Edit...' },
      { name: 'Discipline', value: 'Architectural' },
      { name: 'Show Hidden Lines', value: 'By Discipline' },
      { name: 'Default Analysis Display Style', value: 'None' },
      { name: 'Sun Path', kind: 'check' },
    ],
  },
  {
    name: 'Extents',
    rows: [
      { name: 'Crop View', kind: 'check' },
      { name: 'Crop Region Visible', kind: 'check' },
      { name: 'Annotation Crop', kind: 'check' },
      { name: 'Far Clip Active', kind: 'check' },
      { name: 'Far Clip Offset', value: '304800.0', disabled: true },
      { name: 'Scope Box', value: 'None' },
      { name: 'Section Box', kind: 'check' },
    ],
  },
  {
    name: 'Camera',
    rows: [
      { name: 'Rendering Settings', kind: 'button', value: 'Edit...' },
      { name: 'Locked Orientation', kind: 'check', disabled: true },
      { name: 'Projection Mode', value: 'Orthographic' },
      { name: 'Eye Elevation', value: '2231.6' },
      { name: 'Target Elevation', value: '1541.1' },
      { name: 'Camera Position', value: 'Adjusting', disabled: true },
    ],
  },
]

function PropertyValue({ row, id }) {
  if (row.kind === 'input') {
    return <input id={id} type="text" defaultValue={row.value} className="block h-[17px] w-full border border-black bg-white px-1 pb-[2px] outline-none" />
  }
  if (row.kind === 'button') {
    return (
      <button id={id} type="button" className="ml-px block h-[17px] w-[177px] border border-r-2 border-b-2 border-[#adadad] bg-[#e1e1e1] leading-[14px]">
        {row.value}
      </button>
    )
  }
  if (row.kind === 'check') {
    return (
      <input
        id={id}
        type="checkbox"
        disabled={row.disabled}
        className="mt-[3px] ml-[3px] block size-[13px] appearance-none border border-[#333] bg-white disabled:border-[#ccc]"
      />
    )
  }
  return <span className="pl-[2px]">{row.value}</span>
}

function PropertyGroup({ group }) {
  return (
    <tbody>
      <tr className="h-[18px] bg-[#dcdcdc]">
        <th colSpan={2} className="p-0 pl-[2px] text-left align-top leading-4 font-normal">{group.name}</th>
        <td className="p-0">
          <svg width="7" height="9" viewBox="0 0 7 9" fill="none" stroke="#000" strokeWidth="1.4" className="-ml-px" aria-hidden="true">
            <path d="M1 4L3.5 1.2L6 4M1 8L3.5 5.2L6 8" />
          </svg>
        </td>
      </tr>
      {group.rows.map((row) => {
        const id = row.name.toLowerCase().replace(/[^a-z]+/g, '-')
        return (
          <tr key={row.name} className={row.disabled ? 'h-[18px] text-[#7a7a7a]' : 'h-[18px]'}>
            <th className="border-r border-b border-dotted border-[#777] p-0 pl-2 text-left align-top leading-[15px] font-normal whitespace-pre">
              {row.kind ? <label htmlFor={id}>{row.name}</label> : row.name}
            </th>
            <td className="border-r border-b border-dotted border-[#777] p-0 align-top leading-[15px]">
              <PropertyValue row={row} id={id} />
            </td>
            <td className="border-r border-b border-dotted border-[#777] p-0" />
          </tr>
        )
      })}
    </tbody>
  )
}

function PaletteTitle({ children }) {
  return (
    <div className="flex h-5 shrink-0 items-center justify-between pt-px pl-[2px] text-[#444]">
      <h2>{children}</h2>
      <button type="button" aria-label="Close"><X size={14} strokeWidth={2.6} color="#333" /></button>
    </div>
  )
}

function Properties() {
  return (
    <section className="flex flex-col bg-[#eee] px-[2px]">
      <PaletteTitle>Properties</PaletteTitle>
      <div className="flex h-[72px] items-center border border-[#cbcbcb] bg-[#f0f0f0] pr-px pl-[2px] text-[#444]">
        <div className="flex size-[66px] items-center justify-center border border-[#cbcbcb]"><HouseBig /></div>
        <span className="ml-[5px] flex-1 pt-px">3D View</span>
        <Caret w={8} color="#333" />
      </div>
      <div className="mt-px flex h-6 items-start">
        <div className="relative w-[307px]">
          <select aria-label="View" className="block h-[23px] w-full appearance-none border border-[#adadad] bg-[#e1e1e1] pl-[3px] text-[#222]">
            <option>3D View: {'{3D}'}</option>
          </select>
          <ChevronDown size={13} color="#444" strokeWidth={2} className="pointer-events-none absolute top-[5px] right-[3px]" />
        </div>
        <button type="button" className="ml-[6px] flex h-5 items-center gap-[5px]"><EditTypeIcon />Edit Type</button>
      </div>
      <div className="flex h-[457px] overflow-hidden text-black">
        <div className="w-[372px] shrink-0 overflow-hidden bg-white">
          <table className="w-full table-fixed border-separate border-spacing-0">
            <colgroup>
              <col className="w-[181px]" />
              <col className="w-[179px]" />
              <col />
            </colgroup>
            {PROPERTY_GROUPS.map((group) => <PropertyGroup key={group.name} group={group} />)}
          </table>
        </div>
        <div className="ml-px flex w-[15px] flex-col items-center bg-[#f0f0f0]">
          <ChevronUp size={13} strokeWidth={3} color="#555" className="my-[2px] shrink-0" />
          <div className="h-[307px] w-full bg-[#cdcdcd]" />
          <ChevronDown size={13} strokeWidth={3} color="#555" className="mt-auto mb-[2px] shrink-0" />
        </div>
      </div>
      <div className="flex h-[27px] items-start justify-between pt-[2px] pr-[2px] pl-[2px]">
        <a href="#help" className="leading-5 text-[#0563c1] underline">Properties help</a>
        <button type="button" disabled className="h-[21px] w-[73px] border border-[#bfbfbf] bg-[#ccc] text-[#838383]">Apply</button>
      </div>
    </section>
  )
}

/* ---------- project browser ---------- */

/* each row is [guide cells, label, icon]; a cell is one 20px column of the connector lines */
const TREE = [
  ['-first', 'Views (all)', ViewsIcon],
  ['line -mid', 'Floor Plans'],
  ['line line tee', 'Level 1'],
  ['line line tee', 'Level 2'],
  ['line line elbow', 'Site'],
  ['line -mid', 'Ceiling Plans'],
  ['line line tee', 'Level 1'],
  ['line line elbow', 'Level 2'],
  ['line +mid', '3D Views'],
  ['line -last', 'Elevations (Building Elevation)'],
  ['line none tee', 'East'],
  ['line none tee', 'North'],
  ['line none tee', 'South'],
  ['line none elbow', 'West'],
  ['tee', 'Legends', LegendIcon],
  ['tee', 'Schedules/Quantities (all)', ScheduleIcon],
  ['tee', 'Sheets (all)', SheetIcon],
  ['+mid', 'Families', FamilyIcon],
  ['+mid', 'Groups', GroupsTree],
  ['elbow', 'Revit Links', LinkIcon],
]

function Guide({ kind, reach }) {
  const box = kind[0] === '-' || kind[0] === '+'
  const top = kind !== 'none' && kind !== '-first'
  const bottom = kind === 'line' || kind === 'tee' || kind.endsWith('mid') || kind === '-first'
  const side = box || kind === 'tee' || kind === 'elbow'
  return (
    <svg width="20" height="18" viewBox="0 0 20 18" className="block shrink-0 overflow-visible" fill="none" aria-hidden="true">
      <g stroke="#8a8a8a" strokeDasharray="1 1" shapeRendering="crispEdges">
        {top && <path d="M8.5 0V10" />}
        {bottom && <path d="M8.5 10V18" />}
        {side && <path d={`M9 10.5H${reach}`} />}
      </g>
      {box && (
        <g shapeRendering="crispEdges">
          <rect x="4.5" y="6.5" width="8" height="8" fill="#f4f4f4" stroke="#8c8c8c" />
          <path d={kind[0] === '+' ? 'M6 10.5H11M8.5 8V13' : 'M6 10.5H11'} stroke="#2b4fa0" />
        </g>
      )}
    </svg>
  )
}

function ProjectBrowser() {
  return (
    <section className="flex flex-1 flex-col border-t-2 border-[#cbcbcb] bg-[#eee] px-[2px]">
      <PaletteTitle>Project Browser - Project1</PaletteTitle>
      <ul className="flex-1 bg-white text-black">
        {TREE.map(([guides, label, Icon], index) => {
          const cells = guides.split(' ')
          return (
            <li key={index} className="flex h-[18px] leading-[18px]">
              {cells.map((kind, i) => <Guide key={i} kind={kind} reach={Icon ? 19 : 23} />)}
              {Icon && <Icon />}
              <span className={index === 2 ? 'ml-[3px] bg-[#e1e1e1] px-[3px]' : 'ml-[6px]'}>{label}</span>
            </li>
          )
        })}
      </ul>
    </section>
  )
}

/* ---------- drawing area ---------- */

function ViewTabs() {
  return (
    <div className="flex h-5 bg-[#cbcbcb] pt-px text-[#555]">
      <button type="button" className="flex w-32 items-center gap-2 pl-[5px]"><PlanTab />Level 1</button>
      <div className="-mt-px flex w-32 items-center justify-between bg-white pt-px pr-[3px] pl-[5px]">
        <button type="button" className="flex items-center gap-2 font-bold text-[#333]"><HouseSmall />{'{3D}'}</button>
        <button type="button" aria-label="Close view"><X size={14} strokeWidth={2.6} color="#333" /></button>
      </div>
      <button type="button" className="flex items-center gap-2 pl-[5px]"><ElevTab />North</button>
    </div>
  )
}

function ModelView() {
  return (
    <svg width="1323" height="1107" viewBox="397 198 1323 1107" className="block" shapeRendering="crispEdges" role="img" aria-label="3D view">
      <g fill="#808080">
        <path d="M399 903L620 947.5V200H655V1153L399 1101Z" />
        <path d="M728 380L732 370L736 373V1069L728 1077Z" />
        <path d="M757.5 393L1020.5 340.5V1012.5L964 1002V395.5L757.5 436.5Z" />
      </g>
      <g fill="none" stroke="#000">
        <path d="M620.5 200V1134.5L654.5 1153V200M654.5 1153L674 1150" />
        <path d="M1114.5 200V1056" />
        <path d="M731.5 1067V370.5L1039.5 309.5L1042.5 312.5V1008.5L1020.5 1012.5V340.5L757.5 393V1065" />
        <path d="M731.5 370.5L735.5 373.5L1042.5 312.5M735.5 373.5V1069.5L731.5 1067" />
        <path d="M1016.5 341.5V1011M990.5 346.5V996.5L1018 1012M757.5 1042.5L990.5 996.5" />
        <path d="M757.5 1062.5L1016 1010.5M735.5 1069.5L757.5 1065.5L1020.5 1012.5" />
        <path d="M738 1069L673.5 1153L799 1225L1234.5 1137.5L1042.5 1008.5M738 1069L799 1225" />
      </g>
    </svg>
  )
}

export default function App() {
  return (
    <div className="flex min-h-screen flex-col bg-[#cbcbcb] font-['Open_Sans',sans-serif] text-[11px] leading-4">
      <QuickAccess />
      <RibbonTabs />
      <Ribbon />
      <div className="mb-[2px] ml-[2px] h-[26px] bg-[#eee]" />
      <div className="flex flex-1">
        <aside className="ml-[2px] flex w-[393px] shrink-0 flex-col">
          <Properties />
          <ProjectBrowser />
        </aside>
        <main className="ml-[2px] min-w-0 flex-1 overflow-hidden bg-white">
          <ViewTabs />
          <ModelView />
        </main>
      </div>
    </div>
  )
}
